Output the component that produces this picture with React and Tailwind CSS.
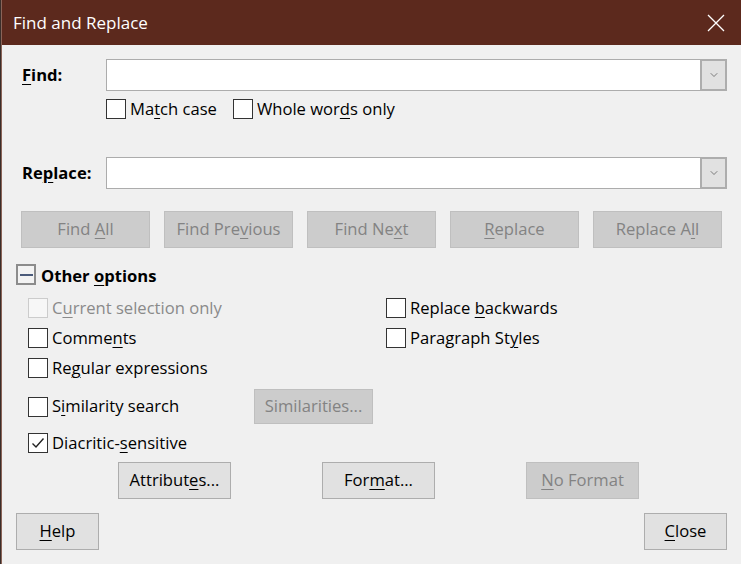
import { ChevronDown } from 'lucide-react'

function Key({ children }) {
  return <span className="underline underline-offset-[3px] decoration-1">{children}</span>
}

function Box({ checked, disabled }) {
  return (
    <span
      className={
        'flex w-[20px] h-[20px] shrink-0 items-center justify-center border ' +
        (disabled ? 'border-[#cccccc] bg-[#f7f7f7]' : 'border-[#333333] bg-white')
      }
    >
      {checked && (
        <svg width="16" height="16" viewBox="0 0 16 16">
          <polyline points="2.5,8.5 6,12 13.5,3.5" fill="none" stroke="#222" strokeWidth="1.4" />
        </svg>
      )}
    </span>
  )
}

function Check({ children, checked, disabled }) {
  return (
    <label className={'flex items-center gap-[4px] h-[20px] ' + (disabled ? 'text-[#8a8a8a]' : 'text-black')}>
      <Box checked={checked} disabled={disabled} />
      <span className="leading-none">{children}</span>
    </label>
  )
}

function Btn({ children, disabled, w = 'w-[129px]', h = 'h-[37px]' }) {
  return (
    <button
      className={
        'flex items-center justify-center border ' + w + ' ' + h + ' ' +
        (disabled ? 'bg-[#cccccc] border-[#bfbfbf] text-[#838383]' : 'bg-[#e1e1e1] border-[#adadad] text-black')
      }
    >
      <span>{children}</span>
    </button>
  )
}

function Combo() {
  return (
    <div className="flex w-[621px] h-[32px]">
      <div className="flex-1 bg-white border border-[#acacac] border-r-0" />
      <div className="w-[27px] flex items-center justify-center bg-[#e1e1e1] border-2 border-[#adadad]">
        <ChevronDown size={12} strokeWidth={1.3} className="text-[#444]" />
      </div>
    </div>
  )
}

export default function App() {
  return (
    <div className="flex w-[741px] h-[564px] font-['Open_Sans',sans-serif] text-[16.6px] text-black">
      <div className="w-px bg-[#3a2e2a]" />
      <div className="flex-1 flex flex-col bg-[#f0f0f0] border-l border-[#8a6458]">
        <div className="flex items-center justify-between h-[45px] bg-[#5c291d] text-white pl-[11px] pr-[16px]">
          <span className="text-[17px] pt-[1px]">Find and Replace</span>
          <svg width="18" height="18" viewBox="0 0 18 18">
            <path d="M1 1L17 17M17 1L1 17" stroke="#fff" strokeWidth="1.3" />
          </svg>
        </div>

        <div className="flex items-center mt-[14px] pl-[20px]">
          <span className="w-[84px] font-bold"><Key>F</Key>ind:</span>
          <Combo />
        </div>

        <div className="flex items-center mt-[8px] pl-[104px]">
          <Check>Ma<Key>t</Key>ch case</Check>
          <div className="ml-[16px]">
            <Check>Whole wor<Key>d</Key>s only</Check>
          </div>
        </div>

        <div className="flex items-center mt-[38px] pl-[20px]">
          <span className="w-[84px] font-bold">Re<Key>p</Key>lace:</span>
          <Combo />
        </div>

        <div className="flex gap-[14px] mt-[22px] pl-[19px]">
          <Btn disabled>Find <Key>A</Key>ll</Btn>
          <Btn disabled>Find Pre<Key>v</Key>ious</Btn>
          <Btn disabled>Find Ne<Key>x</Key>t</Btn>
          <Btn disabled><Key>R</Key>eplace</Btn>
          <Btn disabled>Replace A<Key>l</Key>l</Btn>
        </div>

        <div className="flex items-center h-[21px] gap-[5px] mt-[16px] pl-[14px]">
          <span className="flex items-center justify-center w-[20px] h-[21px] border-2 border-[#8c8c8c] bg-[#f3f3f3]">
            <span className="w-[13px] h-[2px] bg-[#4b5b7b]" />
          </span>
          <span className="font-bold leading-none pt-[3px]">Other <Key>o</Key>ptions</span>
        </div>

        <div className="grid grid-cols-[358px_1fr] gap-y-[10px] mt-[13px] pl-[26px]">
          <Check disabled>C<Key>u</Key>rrent selection only</Check>
          <Check>Replace <Key>b</Key>ackwards</Check>
          <Check>Comme<Key>n</Key>ts</Check>
          <Check>Paragraph St<Key>y</Key>les</Check>
          <Check>Re<Key>g</Key>ular expressions</Check>
        </div>

        <div className="flex items-center mt-[11px] pl-[26px]">
          <div className="w-[226px]">
            <Check>S<Key>i</Key>milarity search</Check>
          </div>
          <Btn disabled w="w-[119px]" h="h-[35px]">Similarities...</Btn>
        </div>

        <div className="mt-[9px] pl-[26px]">
          <Check checked>Diacritic-<Key>s</Key>ensitive</Check>
        </div>

        <div className="flex gap-[91px] mt-[9px] pl-[116px]">
          <Btn w="w-[113px]">Attribut<Key>e</Key>s...</Btn>
          <Btn w="w-[113px]">For<Key>m</Key>at...</Btn>
          <Btn disabled w="w-[113px]"><Key>N</Key>o Format</Btn>
        </div>

        <div className="flex justify-between mt-[14px] pl-[14px] pr-[14px]">
          <Btn w="w-[83px]"><Key>H</Key>elp</Btn>
          <Btn w="w-[83px]"><Key>C</Key>lose</Btn>
        </div>
      </div>
    </div>
  )
}
